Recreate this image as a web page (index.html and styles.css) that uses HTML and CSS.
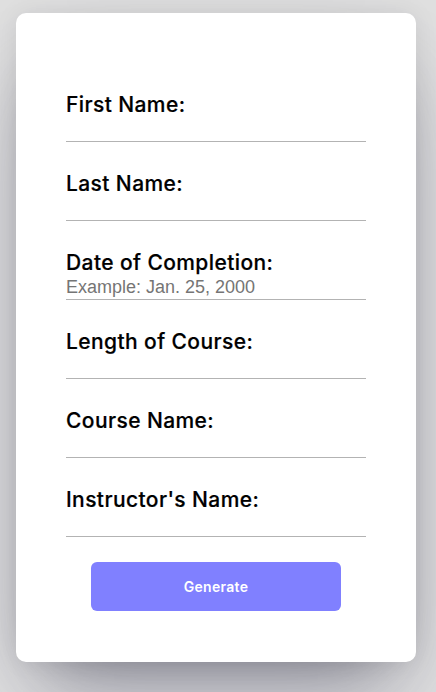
FILE: index.html
```html
<!DOCTYPE html>
<html lang="en">
<head>
<meta charset="utf-8">
<title>Certificate Generator</title>
<link rel="stylesheet" href="styles.css">
</head>
<body>
<div class="card">
  <form class="form">
    <div class="fields">
      <div class="field">
        <label class="label" for="first">First Name:</label>
        <input class="input" id="first" type="text">
      </div>
      <div class="field">
        <label class="label" for="last">Last Name:</label>
        <input class="input" id="last" type="text">
      </div>
      <div class="field">
        <label class="label" for="date">Date of Completion:</label>
        <input class="input" id="date" type="text" placeholder="Example: Jan. 25, 2000">
      </div>
      <div class="field">
        <label class="label" for="length">Length of Course:</label>
        <input class="input" id="length" type="text">
      </div>
      <div class="field">
        <label class="label" for="course">Course Name:</label>
        <input class="input" id="course" type="text">
      </div>
      <div class="field">
        <label class="label" for="instructor">Instructor's Name:</label>
        <input class="input" id="instructor" type="text">
      </div>
    </div>
    <button class="button" type="button">Generate</button>
  </form>
</div>
</body>
</html>
```

FILE: styles.css
```css
html, body {
  margin: 0;
  padding: 0;
}

body {
  background: #e0e0e0;
  min-height: 692px;
  padding: 13px 16px 0;
  box-sizing: border-box;
  font-family: Inter, "Liberation Sans", sans-serif;
}

.card {
  width: 400px;
  height: 649px;
  box-sizing: border-box;
  background: #ffffff;
  border-radius: 10px;
  box-shadow: 0 50px 100px -20px rgba(50, 50, 93, 0.3), 0 30px 60px -30px rgba(0, 0, 0, 0.35), 0 0 24px rgba(0, 0, 0, 0.07);
  padding: 80px 50px 0;
}

.form {
  display: flex;
  flex-direction: column;
  align-items: center;
}

.fields {
  width: 300px;
  display: flex;
  flex-direction: column;
  gap: 30px;
}

.field {
  display: flex;
  flex-direction: column;
}

.label {
  display: block;
  font-family: Inter, "Liberation Sans", sans-serif;
  font-weight: 500;
  font-size: 21px;
  line-height: 24px;
  color: #000;
  letter-spacing: 0.4px;
  -webkit-text-stroke: 0.2px #000;
}

.input {
  display: block;
  width: 100%;
  height: 25px;
  box-sizing: border-box;
  padding: 0;
  margin: 0;
  border: none;
  border-bottom: 1px solid #b3b3b3;
  outline: none;
  background: transparent;
  font-family: "Liberation Sans", Arial, sans-serif;
  font-size: 18px;
  color: #333;
}

.input::placeholder {
  color: #757575;
}

.button {
  margin-top: 25px;
  width: 250px;
  height: 49px;
  border: none;
  border-radius: 6px;
  background: #8080ff;
  color: #ffffff;
  font-family: Inter, "Liberation Sans", sans-serif;
  font-weight: 600;
  font-size: 14px;
  letter-spacing: 0.3px;
  cursor: pointer;
}
```
